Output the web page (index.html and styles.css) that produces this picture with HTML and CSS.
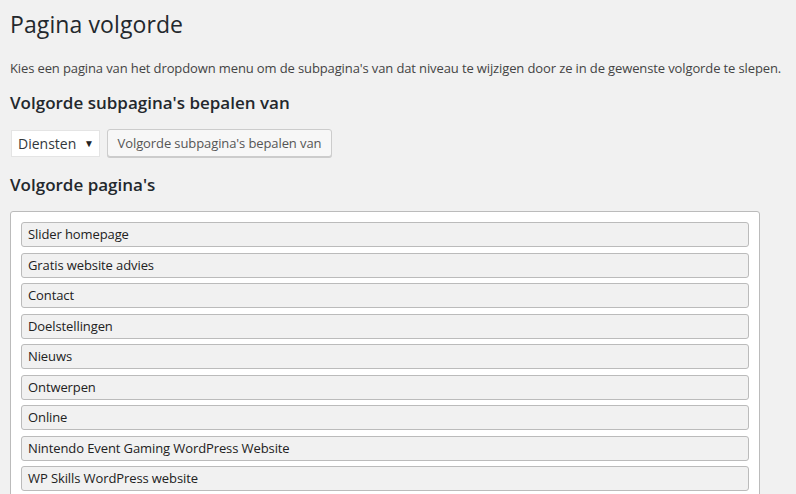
FILE: index.html
```html
<!DOCTYPE html>
<html lang="nl">
<head>
<meta charset="utf-8">
<title>Pagina volgorde</title>
<link rel="stylesheet" href="styles.css">
</head>
<body>
<div class="wrap">
  <h1 class="title">Pagina volgorde</h1>
  <p class="intro">Kies een pagina van het dropdown menu om de subpagina's van dat niveau te wijzigen door ze in de gewenste volgorde te slepen.</p>
  <h2 class="section">Volgorde subpagina's bepalen van</h2>
  <div class="controls">
    <div class="select">Diensten <span class="arrow">▼</span></div>
    <button class="button">Volgorde subpagina's bepalen van</button>
  </div>
  <h2 class="section section-2">Volgorde pagina's</h2>
  <div class="box">
    <div class="item">Slider homepage</div>
    <div class="item">Gratis website advies</div>
    <div class="item">Contact</div>
    <div class="item">Doelstellingen</div>
    <div class="item">Nieuws</div>
    <div class="item">Ontwerpen</div>
    <div class="item">Online</div>
    <div class="item">Nintendo Event Gaming WordPress Website</div>
    <div class="item">WP Skills WordPress website</div>
  </div>
</div>
</body>
</html>
```

FILE: styles.css
```css
html, body {
  margin: 0;
  padding: 0;
  background: #f1f1f1;
  overflow: hidden;
  height: 494px;
}
body {
  font-family: "Open Sans", "Liberation Sans", sans-serif;
  color: #444;
  font-size: 13px;
}
.wrap {
  padding: 0 0 0 10px;
}
.title {
  font-size: 23px;
  font-weight: 400;
  line-height: 29px;
  color: #23282d;
  margin: 0;
  padding: 10px 0 0 0;
  letter-spacing: 0.1px;
}
.intro {
  font-size: 13px;
  line-height: 20px;
  margin: 19px 0 0 0;
  color: #444;
  white-space: nowrap;
  letter-spacing: -0.12px;
}
.section {
  font-size: 17px;
  font-weight: 600;
  line-height: 22px;
  color: #23282d;
  margin: 14px 0 0 0;
}
.section-2 {
  margin-top: 17px;
}
.controls {
  display: flex;
  align-items: flex-start;
  gap: 7px;
  margin-top: 15px;
}
.select {
  box-sizing: border-box;
  height: 27px;
  width: 89px;
  margin: 1px 0 0 1px;
  background: #fff;
  border: 1px solid #e4e4e4;
  color: #32373c;
  font-size: 14px;
  line-height: 25px;
  padding-left: 6px;
  position: relative;
}
.arrow {
  position: absolute;
  right: 5px;
  top: 0;
  font-size: 10px;
  color: #222;
}
.button {
  box-sizing: border-box;
  height: 28px;
  width: 225px;
  background: #f7f7f7;
  border: 1px solid #ccc;
  border-radius: 3px;
  box-shadow: 0 1px 0 #ccc;
  color: #555;
  font-family: "Open Sans", "Liberation Sans", sans-serif;
  font-size: 13px;
  letter-spacing: -0.1px;
  line-height: 26px;
  padding: 0;
  text-align: center;
}
.box {
  box-sizing: border-box;
  width: 750px;
  margin-top: 15px;
  background: #fff;
  border: 1px solid #bbb;
  border-radius: 3px;
  padding: 10px 10px;
}
.item {
  box-sizing: border-box;
  height: 25px;
  margin-bottom: 5.5px;
  background: #f1f1f1;
  border: 1px solid #bbb;
  border-radius: 3px;
  padding-left: 6px;
  line-height: 23px;
  font-size: 13px;
  letter-spacing: -0.1px;
  color: #222;
}
```
